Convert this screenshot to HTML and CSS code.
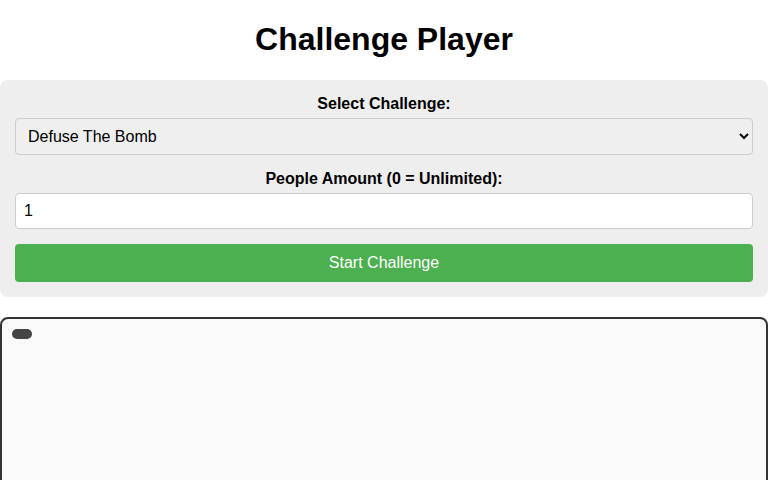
FILE: index.html
```html
<!DOCTYPE html>
<html lang="en">
<head>
    <meta charset="UTF-8">
    <meta name="viewport" content="width=device-width, initial-scale=1.0">
    <title>Challenge Player</title>
    <link rel="stylesheet" href="styles.css">
</head>
<body>
    <h1>Challenge Player</h1>
    <div class="controls">
        <label for="challenge">Select Challenge:</label>
        <select id="challenge">
            <option>Defuse The Bomb</option>
        </select>
        <label for="people">People Amount (0 = Unlimited):</label>
        <input type="number" id="people" value="1">
        <button id="start">Start Challenge</button>
    </div>
    <div class="stage">
        <div class="status"></div>
    </div>
</body>
</html>
```
FILE: styles.css
```css
body {
    margin: 0;
    font-family: 'Liberation Sans', Arial, sans-serif;
    background: #fff;
    color: #000;
}

h1 {
    text-align: center;
    font-size: 32px;
}

.controls {
    display: flex;
    flex-direction: column;
    background: #eee;
    padding: 15px;
    border-radius: 8px;
}

.controls label {
    font-weight: bold;
    text-align: center;
    font-size: 16px;
    line-height: 18px;
    margin-bottom: 5px;
}

.controls select,
.controls input {
    font-family: inherit;
    font-size: 16px;
    padding: 8px;
    border: 1px solid #ccc;
    border-radius: 4px;
    margin-bottom: 15px;
}

.controls select {
    background-color: #efefef;
    height: 37px;
}

.controls input {
    background: #fff;
    height: 36px;
    box-sizing: border-box;
}

#start {
    background-color: #4CAF50;
    color: white;
    border: none;
    border-radius: 4px;
    padding: 10px;
    font-family: inherit;
    font-size: 16px;
    line-height: 18px;
    cursor: pointer;
}

#start:hover {
    background-color: #45a049;
}

.stage {
    margin-top: 20px;
    height: 300px;
    border: 2px solid #333;
    border-radius: 8px;
    background: #f9f9f9;
    padding: 10px;
}

.status {
    width: 20px;
    height: 10px;
    border-radius: 5px;
    background: #444;
}
```
